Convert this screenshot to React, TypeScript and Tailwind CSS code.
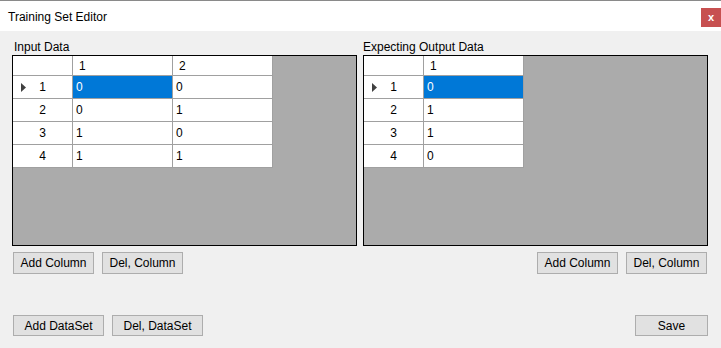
import React from 'react'

const font = { fontFamily: '"Liberation Sans", Arial, sans-serif' }

function Arrow() {
  return (
    <svg width="5" height="9" viewBox="0 0 5 9" className="absolute left-[8px] top-[7px]">
      <path d="M0 0 L5 4.5 L0 9 Z" fill="#404040" />
    </svg>
  )
}

function Grid({ cols, rows }: { cols: string[]; rows: string[][] }) {
  return (
    <div className="w-full h-[191px] shrink-0 border border-black bg-[#ababab]">
      <div className="flex">
        <div className="w-[60px] h-[20px] bg-white border-r border-b border-[#a0a0a0]" />
        {cols.map((c) => (
          <div
            key={c}
            className="w-[100px] h-[20px] bg-white border-r border-b border-[#a0a0a0] pl-[6px] flex items-center text-[12px] text-black"
          >
            {c}
          </div>
        ))}
      </div>
      {rows.map((r, i) => (
        <div key={i} className="flex">
          <div className="relative w-[60px] h-[23px] bg-white border-r border-b border-[#a0a0a0] flex items-center justify-center text-[12px] text-black">
            {i === 0 && <Arrow />}
            {i + 1}
          </div>
          {r.map((v, j) => (
            <div
              key={j}
              className={
                i === 0 && j === 0
                  ? 'w-[100px] h-[23px] bg-[#0078d7] text-white border-r border-b border-[#a0a0a0] pl-[3px] flex items-center text-[12px]'
                  : 'w-[100px] h-[23px] bg-white text-black border-r border-b border-[#a0a0a0] pl-[3px] flex items-center text-[12px]'
              }
            >
              {v}
            </div>
          ))}
        </div>
      ))}
    </div>
  )
}

function Btn({ label, w, h = 'h-[22px]' }: { label: string; w: string; h?: string }) {
  return (
    <button
      className={`${w} ${h} bg-[#e1e1e1] border border-[#adadad] text-[12px] text-black flex items-center justify-center`}
    >
      {label}
    </button>
  )
}

export default function App() {
  return (
    <div className="w-[721px] h-[348px] bg-[#f0f0f0] flex flex-col overflow-hidden" style={font}>
      {/* title bar */}
      <div className="h-[31px] bg-white border-t border-[#8a8a8a] flex items-start">
        <div className="pl-[8px] pt-[7px] text-[12px] text-black flex-1">Training Set Editor</div>
        <div className="mt-[7px] w-[20px] h-[19px] bg-[#c75050] text-white text-[11px] font-bold flex items-center justify-center">
          x
        </div>
      </div>

      <div className="flex gap-[6px] pl-[12px] pr-[13px] pt-[6px]">
        <div className="flex-1 flex flex-col">
          <div className="h-[18px] text-[12px] text-black pl-[2px] pt-[1px]">Input Data</div>
          <Grid
            cols={['1', '2']}
            rows={[
              ['0', '0'],
              ['0', '1'],
              ['1', '0'],
              ['1', '1'],
            ]}
          />
          <div className="flex gap-[8px] mt-[6px] pl-[1px]">
            <Btn label="Add Column" w="w-[81px]" />
            <Btn label="Del, Column" w="w-[81px]" />
          </div>
        </div>
        <div className="flex-1 flex flex-col">
          <div className="h-[18px] text-[12px] text-black pt-[1px]">Expecting Output Data</div>
          <Grid cols={['1']} rows={[['0'], ['1'], ['1'], ['0']]} />
          <div className="flex gap-[8px] mt-[6px] justify-end pr-[1px]">
            <Btn label="Add Column" w="w-[81px]" />
            <Btn label="Del, Column" w="w-[81px]" />
          </div>
        </div>
      </div>

      <div className="flex items-center mt-[41px] pl-[13px] pr-[13px]">
        <div className="flex gap-[8px] flex-1">
          <Btn label="Add DataSet" w="w-[91px]" h="h-[21px]" />
          <Btn label="Del, DataSet" w="w-[91px]" h="h-[21px]" />
        </div>
        <Btn label="Save" w="w-[73px]" h="h-[21px]" />
      </div>
    </div>
  )
}
